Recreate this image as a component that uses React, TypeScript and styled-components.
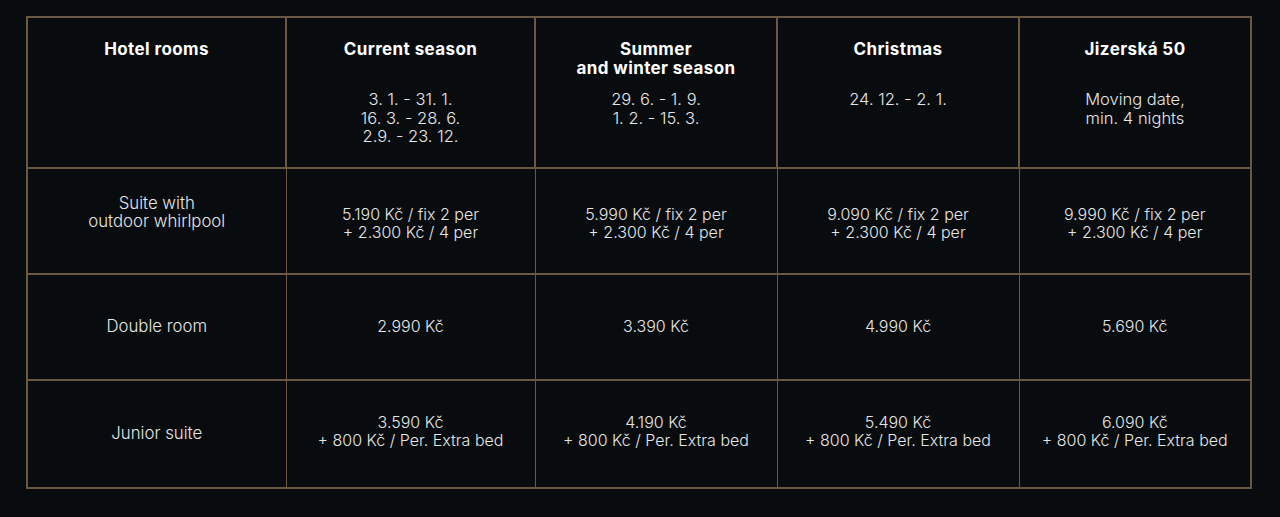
import * as React from "react";
import styled, { createGlobalStyle } from "styled-components";

const GlobalStyle = createGlobalStyle`
  html, body {
    margin: 0;
    padding: 0;
    background: #080c0e;
  }
  body {
    font-family: Inter, "Open Sans", "Liberation Sans", sans-serif;
    color: #e4e4e4;
  }
`;

const Page = styled.div`
  width: 1280px;
  height: 517px;
  box-sizing: border-box;
  padding: 16px 30px 0 26px;
  background: #080c0e;
`;

const PriceTable = styled.table`
  width: 1224px;
  border-collapse: collapse;
  table-layout: fixed;
  border: 2px solid #6a5843;
`;

const HeadCell = styled.th`
  height: 151px;
  padding: 22px 6px 0;
  box-sizing: border-box;
  vertical-align: top;
  text-align: center;
  border: 2px solid #6a5843;
  border-top-width: 1px;
  font-weight: 400;
`;

const Title = styled.div`
  min-height: 38px;
  margin-bottom: 12px;
  font-size: 17px;
  font-weight: 700;
  line-height: 19px;
  color: #ffffff;
  letter-spacing: 0.4px;
`;

const Dates = styled.div`
  font-size: 16.5px;
  font-weight: 300;
  line-height: 18.5px;
  color: #e6e6e6;
`;

// $shift moves the text off the vertical centre (px, positive = down)
const Cell = styled.td<{ $rowHeight: number; $shift?: number }>`
  height: ${(p) => p.$rowHeight}px;
  padding: ${(p) => Math.max(0, (p.$shift ?? 0) * 2)}px 6px
    ${(p) => Math.max(0, -(p.$shift ?? 0) * 2)}px;
  box-sizing: border-box;
  text-align: center;
  vertical-align: middle;
  border: 2px solid #6a5843;
  border-left-width: 1.5px;
  border-right-width: 1.5px;
  font-size: 16px;
  font-weight: 300;
  line-height: 18.5px;
  color: #e6e6e6;
`;

const RoomCell = styled(Cell)`
  font-size: 16.8px;
  line-height: 18px;
  font-weight: 300;
`;

const columns = [
  { width: 259, title: ["Hotel rooms"], dates: [] as string[] },
  {
    width: 249,
    title: ["Current season"],
    dates: ["3. 1. - 31. 1.", "16. 3. - 28. 6.", "2.9. - 23. 12."],
  },
  {
    width: 242,
    title: ["Summer", "and winter season"],
    dates: ["29. 6. - 1. 9.", "1. 2. - 15. 3."],
  },
  { width: 242, title: ["Christmas"], dates: ["24. 12. - 2. 1."] },
  {
    width: 232,
    title: ["Jizerská 50"],
    dates: ["Moving date,", "min. 4 nights"],
  },
];

const rows = [
  {
    height: 106,
    roomShift: -9,
    priceShift: 2,
    room: ["Suite with", "outdoor whirlpool"],
    prices: [
      ["5.190 Kč / fix 2 per", "+ 2.300 Kč / 4 per"],
      ["5.990 Kč / fix 2 per", "+ 2.300 Kč / 4 per"],
      ["9.090 Kč / fix 2 per", "+ 2.300 Kč / 4 per"],
      ["9.990 Kč / fix 2 per", "+ 2.300 Kč / 4 per"],
    ],
  },
  {
    height: 106,
    roomShift: -1,
    priceShift: -1,
    room: ["Double room"],
    prices: [["2.990 Kč"], ["3.390 Kč"], ["4.990 Kč"], ["5.690 Kč"]],
  },
  {
    height: 108,
    roomShift: -1,
    priceShift: -3,
    room: ["Junior suite"],
    prices: [
      ["3.590 Kč", "+ 800 Kč / Per. Extra bed"],
      ["4.190 Kč", "+ 800 Kč / Per. Extra bed"],
      ["5.490 Kč", "+ 800 Kč / Per. Extra bed"],
      ["6.090 Kč", "+ 800 Kč / Per. Extra bed"],
    ],
  },
];

const Lines = ({ lines }: { lines: string[] }) => (
  <>
    {lines.map((line, i) => (
      <React.Fragment key={i}>
        {i > 0 && <br />}
        {line}
      </React.Fragment>
    ))}
  </>
);

const App = () => {
  return (
    <>
      <GlobalStyle />
      <Page>
        <PriceTable>
          <colgroup>
            {columns.map((c, i) => (
              <col key={i} style={{ width: c.width }} />
            ))}
          </colgroup>
          <thead>
            <tr>
              {columns.map((c, i) => (
                <HeadCell key={i}>
                  <Title>
                    <Lines lines={c.title} />
                  </Title>
                  <Dates>
                    <Lines lines={c.dates} />
                  </Dates>
                </HeadCell>
              ))}
            </tr>
          </thead>
          <tbody>
            {rows.map((r, i) => (
              <tr key={i}>
                <RoomCell $rowHeight={r.height} $shift={r.roomShift}>
                  <Lines lines={r.room} />
                </RoomCell>
                {r.prices.map((p, j) => (
                  <Cell key={j} $rowHeight={r.height} $shift={r.priceShift}>
                    <Lines lines={p} />
                  </Cell>
                ))}
              </tr>
            ))}
          </tbody>
        </PriceTable>
      </Page>
    </>
  );
};

export default App;
